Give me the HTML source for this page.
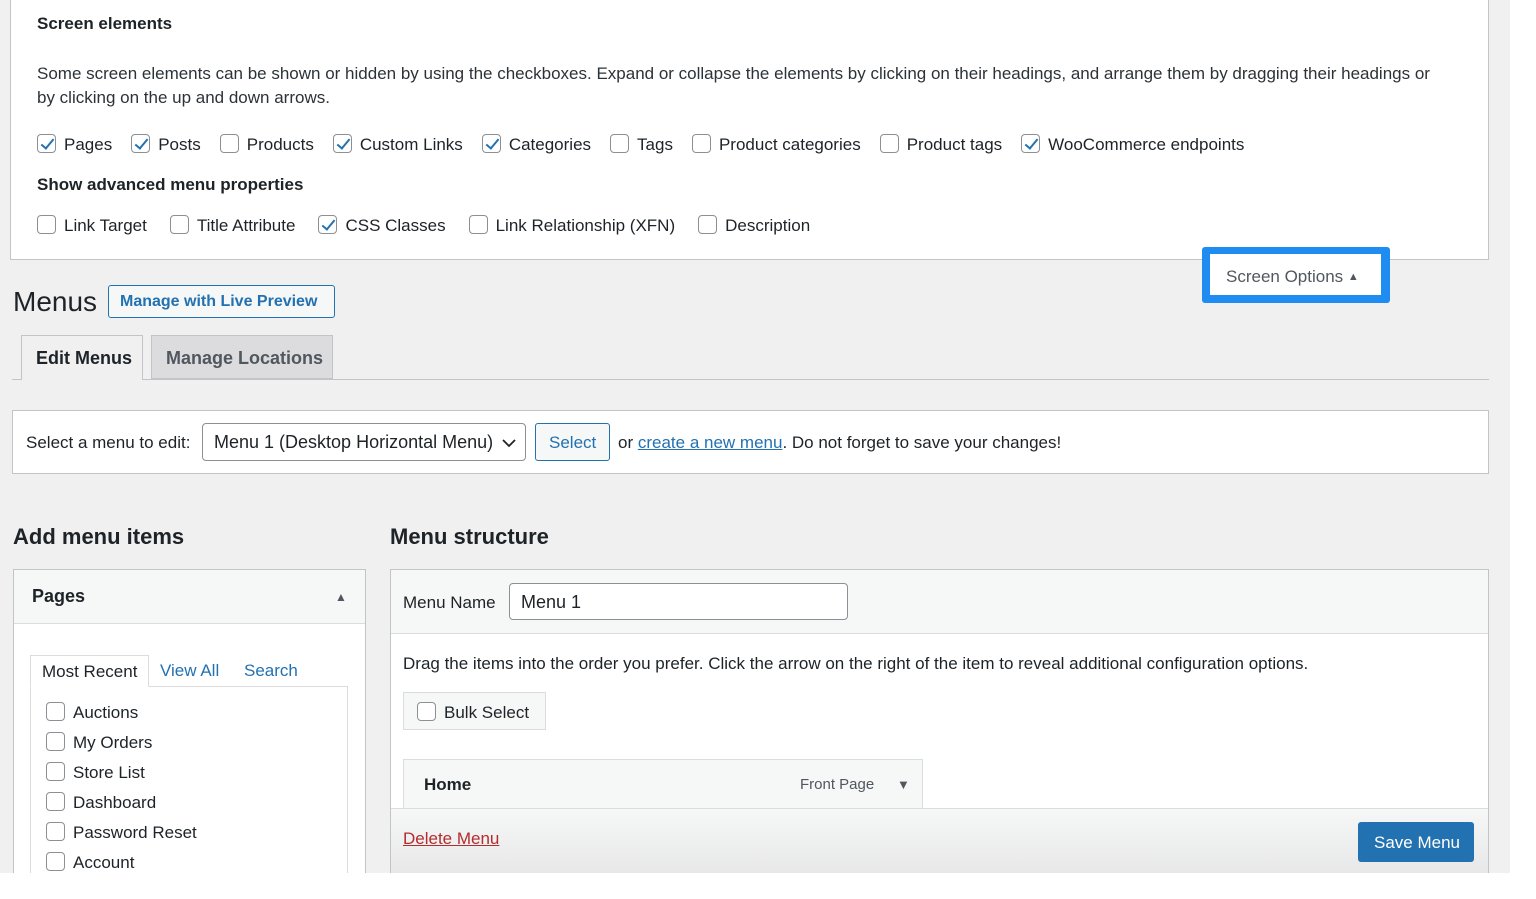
<!DOCTYPE html>
<html><head><meta charset="utf-8"><style>
*{box-sizing:border-box;margin:0;padding:0}
body{width:1536px;height:899px;background:#fff;font-family:"Liberation Sans",sans-serif;color:#1d2327;position:relative;overflow:hidden}
.bg{position:absolute;left:0;top:0;width:1510px;height:873px;background:#f0f0f1}
.a{position:absolute;white-space:nowrap}
.cb{display:inline-block;width:19px;height:19px;border:1px solid #8c8f94;border-radius:4px;background:#fff;vertical-align:-3px;margin-right:8px;position:relative}
.cb.on::after{content:"";position:absolute;left:6px;top:1px;width:5px;height:11px;border:solid #2271b1;border-width:0 2px 2px 0;transform:rotate(40deg)}
.f17{font-size:17px}
.row span.i{margin-right:19px}
.box{position:absolute;background:#fff;border:1px solid #c3c4c7}
.link{color:#2271b1}
</style></head><body>
<div class="bg"></div>
<div class="box" style="left:10px;top:-1px;width:1479px;height:261px;border-color:#c3c4c7"></div>
<div class="a" style="left:37px;top:14px;font-size:17px;font-weight:bold;color:#1d2327">Screen elements</div>
<div class="a f17" style="left:37px;top:62px;line-height:24px;white-space:normal;width:1405px;color:#2c3338">Some screen elements can be shown or hidden by using the checkboxes. Expand or collapse the elements by clicking on their headings, and arrange them by dragging their headings or by clicking on the up and down arrows.</div>
<div class="a f17 row" style="left:37px;top:134px"><span class="i"><span class="cb on"></span>Pages</span><span class="i"><span class="cb on"></span>Posts</span><span class="i"><span class="cb"></span>Products</span><span class="i"><span class="cb on"></span>Custom Links</span><span class="i"><span class="cb on"></span>Categories</span><span class="i"><span class="cb"></span>Tags</span><span class="i"><span class="cb"></span>Product categories</span><span class="i"><span class="cb"></span>Product tags</span><span class="i"><span class="cb on"></span>WooCommerce endpoints</span></div>
<div class="a" style="left:37px;top:175px;font-size:17px;font-weight:bold">Show advanced menu properties</div>
<div class="a f17 row" style="left:37px;top:215px"><span class="i" style="margin-right:23px"><span class="cb"></span>Link Target</span><span class="i" style="margin-right:23px"><span class="cb"></span>Title Attribute</span><span class="i" style="margin-right:23px"><span class="cb on"></span>CSS Classes</span><span class="i" style="margin-right:23px"><span class="cb"></span>Link Relationship (XFN)</span><span class="i"><span class="cb"></span>Description</span></div>

<div class="a" style="left:1202px;top:247px;width:188px;height:56px;background:#1e8cf0;border-radius:3px"></div>
<div class="a f17" style="left:1210px;top:254px;width:171px;height:41px;background:#fff;color:#50575e;padding:13px 0 0 16px">Screen Options <span style="font-size:11px;vertical-align:2px">▲</span></div>

<div class="a" style="left:13px;top:286px;font-size:28px;color:#1d2327">Menus</div>
<div class="a" style="left:108px;top:285px;width:227px;height:33px;border:1px solid #2271b1;border-radius:3px;background:#f6f7f7;color:#2271b1;font-size:16px;font-weight:bold;padding:7px 0 0 11px">Manage with Live Preview</div>

<div class="a" style="left:12px;top:379px;width:1477px;height:1px;background:#c3c4c7"></div>
<div class="a" style="left:21px;top:335px;width:122px;height:45px;border:1px solid #c3c4c7;border-bottom:none;background:#f0f0f1;font-size:18px;font-weight:bold;padding:12px 0 0 14px">Edit Menus</div>
<div class="a" style="left:151px;top:335px;width:182px;height:44px;border:1px solid #c3c4c7;background:#dcdcde;font-size:18px;font-weight:bold;color:#50575e;padding:12px 0 0 14px">Manage Locations</div>

<div class="box" style="left:12px;top:410px;width:1477px;height:64px"></div>
<div class="a f17" style="left:26px;top:433px">Select a menu to edit:</div>
<div class="a" style="left:202px;top:423px;width:324px;height:38px;border:1px solid #8c8f94;border-radius:4px;background:#fff;font-size:18px;padding:8px 0 0 11px">Menu 1 (Desktop Horizontal Menu) <svg width="14" height="10" style="margin-left:4px" viewBox="0 0 14 10"><path d="M1 2l6 6 6-6" fill="none" stroke="#1d2327" stroke-width="1.8"/></svg></div>
<div class="a f17" style="left:535px;top:423px;width:75px;height:38px;border:1px solid #2271b1;border-radius:3px;background:#f6f7f7;color:#2271b1;padding:9px 0 0 13px">Select</div>
<div class="a f17" style="left:618px;top:433px">or <span class="link" style="text-decoration:underline">create a new menu</span>. Do not forget to save your changes!</div>

<div class="a" style="left:13px;top:524px;font-size:22px;font-weight:bold">Add menu items</div>
<div class="a" style="left:390px;top:524px;font-size:22px;font-weight:bold">Menu structure</div>

<div class="box" style="left:13px;top:569px;width:353px;height:320px"></div>
<div class="a" style="left:14px;top:570px;width:351px;height:54px;background:#f6f7f7;border-bottom:1px solid #dcdcde"></div>
<div class="a" style="left:32px;top:586px;font-size:18px;font-weight:bold">Pages</div>
<div class="a" style="left:335px;top:590px;font-size:12px;color:#50575e">▲</div>
<div class="a" style="left:30px;top:686px;width:318px;height:200px;border:1px solid #dcdcde"></div>
<div class="a f17" style="left:30px;top:655px;width:119px;height:32px;border:1px solid #dcdcde;border-bottom:1px solid #fff;background:#fff;padding:6px 0 0 11px">Most Recent</div>
<div class="a f17 link" style="left:160px;top:661px">View All</div>
<div class="a f17 link" style="left:244px;top:661px">Search</div>
<div class="a f17" style="left:46px;top:698px;line-height:30px;white-space:normal">
<div><span class="cb"></span>Auctions</div><div><span class="cb"></span>My Orders</div><div><span class="cb"></span>Store List</div><div><span class="cb"></span>Dashboard</div><div><span class="cb"></span>Password Reset</div><div><span class="cb"></span>Account</div></div>

<div class="box" style="left:390px;top:569px;width:1099px;height:320px"></div>
<div class="a" style="left:391px;top:570px;width:1097px;height:64px;background:#f6f7f7;border-bottom:1px solid #dcdcde"></div>
<div class="a f17" style="left:403px;top:593px">Menu Name</div>
<div class="a" style="left:509px;top:583px;width:339px;height:37px;border:1px solid #8c8f94;border-radius:4px;background:#fff;font-size:18px;padding:8px 0 0 11px">Menu 1</div>
<div class="a f17" style="left:403px;top:654px">Drag the items into the order you prefer. Click the arrow on the right of the item to reveal additional configuration options.</div>
<div class="a f17" style="left:403px;top:692px;width:143px;height:38px;border:1px solid #dcdcde;background:#f6f7f7;padding:9px 0 0 13px"><span class="cb"></span>Bulk Select</div>
<div class="a" style="left:403px;top:759px;width:520px;height:50px;border:1px solid #dcdcde;background:#f6f7f7"></div>
<div class="a f17" style="left:424px;top:775px;font-weight:bold">Home</div>
<div class="a" style="left:800px;top:776px;font-size:15px;color:#50575e">Front Page</div>
<div class="a" style="left:897px;top:777px;font-size:13px;color:#50575e">▼</div>
<div class="a" style="left:391px;top:808px;width:1097px;height:65px;background:linear-gradient(#f6f7f7,#e8e8e9);border-top:1px solid #dcdcde"></div>
<div class="a f17" style="left:403px;top:829px;color:#b32d2e;text-decoration:underline">Delete Menu</div>
<div class="a f17" style="left:1358px;top:822px;width:116px;height:40px;background:#2271b1;border-radius:3px;color:#fff;padding:11px 0 0 16px">Save Menu</div>
<div class="a" style="left:0;top:873px;width:1536px;height:26px;background:#fff"></div>
</body></html>
